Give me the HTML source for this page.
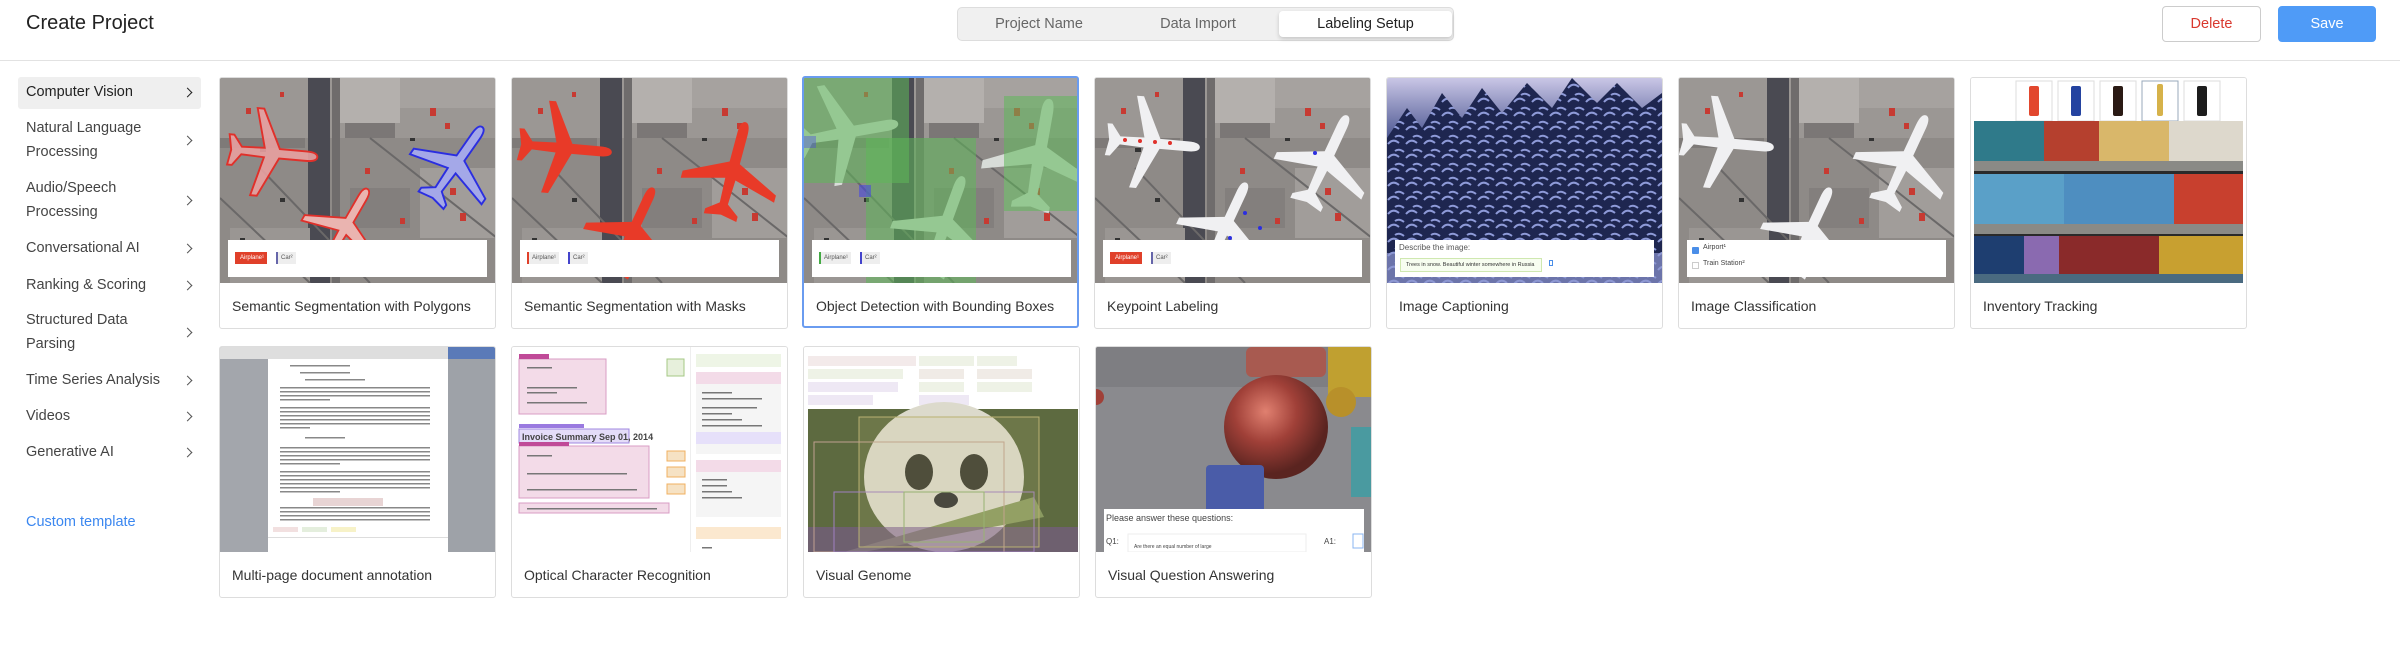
<!DOCTYPE html>
<html><head><meta charset="utf-8"><style>
*{box-sizing:border-box;margin:0;padding:0}
body{width:2400px;height:655px;background:#fff;font-family:"Liberation Sans",Arial,sans-serif;position:relative;overflow:hidden;color:#333}
.abs{position:absolute}
.hdr{position:absolute;left:26px;top:10px;font-size:20px;font-weight:500;color:#222;line-height:26px}
.hline{position:absolute;left:0;top:60px;width:2400px;height:1px;background:#e2e2e2}
.tabs{position:absolute;left:957px;top:7px;width:497px;height:34px;background:#f0f0f0;border:1px solid #ddd;border-radius:5px}
.tab{position:absolute;top:0;height:32px;line-height:32px;font-size:14.5px;color:#666;text-align:center}
.tab.act{top:3px;height:26px;line-height:26px;background:#fff;border-radius:4px;box-shadow:0 2px 4px rgba(0,0,0,.18);color:#222}
.btn{position:absolute;top:6px;height:36px;line-height:34px;text-align:center;font-size:14.5px;border-radius:4px}
.side{position:absolute;left:26px;font-size:14.5px;color:#444;line-height:24px}
.chev{position:absolute;left:184px;width:7px;height:7px;border-right:1.6px solid #555;border-top:1.6px solid #555;transform:rotate(45deg)}
.card{position:absolute;width:277px;height:252px;border:1px solid #ddd;border-radius:3px;overflow:hidden;background:#fff}
.card svg{position:absolute;left:0;top:0;width:275px;height:205px;display:block}
.card .t{position:absolute;left:12px;top:217px;font-size:14px;color:#333;line-height:22px;white-space:nowrap}
.card.sel{border:2px solid #6a9cf0}
.ov{position:absolute;left:8px;top:162px;width:259px;height:37px;background:#fff}
.tag{position:absolute;top:12px;height:12px;font-size:6px;line-height:12px;padding:0 3px;background:#eee;border-left:2px solid #999;color:#555}
</style></head><body>
<svg width="0" height="0" style="position:absolute">
<defs>
<path id="pl" d="M0,-50 C4,-50 5,-44 5,-38 L5,-10 L46,10 L46,17 L5,6 L4,30 L16,39 L16,44 L0,41 L-16,44 L-16,39 L-4,30 L-5,6 L-46,17 L-46,10 L-5,-10 L-5,-38 C-5,-44 -4,-50 0,-50Z"/>
<g id="ap">
<rect width="277" height="205" fill="#8e8a87"/>
<rect x="0" y="0" width="277" height="60" fill="#9b9794"/>
<rect x="88" y="0" width="22" height="205" fill="#4a4a52"/>
<rect x="112" y="0" width="8" height="205" fill="#6f6c6c"/>
<rect x="120" y="0" width="60" height="45" fill="#b4b0ad"/>
<rect x="125" y="45" width="50" height="15" fill="#7b7776"/>
<rect x="180" y="0" width="97" height="30" fill="#a6a29f"/>
<rect x="0" y="60" width="85" height="10" fill="#7e7a78"/>
<rect x="200" y="90" width="77" height="70" fill="#a19d9a"/>
<rect x="10" y="150" width="80" height="55" fill="#9a9693"/>
<rect x="130" y="110" width="60" height="40" fill="#837f7d"/>
<path d="M0 120 L90 205 M40 90 L150 205 M150 60 L277 160" stroke="#6a6868" stroke-width="2"/>
<g fill="#c73a32"><rect x="26" y="30" width="5" height="6"/><rect x="210" y="30" width="6" height="8"/><rect x="225" y="45" width="5" height="6"/><rect x="145" y="90" width="5" height="6"/><rect x="230" y="110" width="6" height="7"/><rect x="180" y="140" width="5" height="6"/><rect x="240" y="135" width="6" height="8"/><rect x="60" y="14" width="4" height="5"/></g>
<g fill="#333"><rect x="40" y="70" width="6" height="4"/><rect x="60" y="120" width="5" height="4"/><rect x="160" y="170" width="6" height="4"/><rect x="20" y="160" width="5" height="3"/><rect x="190" y="60" width="5" height="3"/></g>
</g>
</defs></svg>

<div class="hdr">Create Project</div>
<div class="tabs">
<div class="tab" style="left:1px;width:160px">Project Name</div>
<div class="tab" style="left:160px;width:160px">Data Import</div>
<div class="tab act" style="left:321px;width:173px">Labeling Setup</div>
</div>
<div class="btn" style="left:2162px;width:99px;border:1px solid #ccc;color:#d9382e;background:#fff">Delete</div>
<div class="btn" style="left:2278px;width:98px;background:#4f9bf7;color:#fff;border:1px solid #4f9bf7">Save</div>
<div class="hline"></div>

<div class="abs" style="left:18px;top:77px;width:183px;height:32px;background:#efefef;border-radius:3px"></div>
<div class="side" style="top:80px;color:#222">Computer Vision</div><div class="chev" style="top:89px;border-color:#222"></div>
<div class="side" style="top:116px">Natural Language<br>Processing</div><div class="chev" style="top:137px"></div>
<div class="side" style="top:176px">Audio/Speech<br>Processing</div><div class="chev" style="top:197px"></div>
<div class="side" style="top:236px">Conversational AI</div><div class="chev" style="top:245px"></div>
<div class="side" style="top:273px">Ranking &amp; Scoring</div><div class="chev" style="top:282px"></div>
<div class="side" style="top:308px">Structured Data<br>Parsing</div><div class="chev" style="top:329px"></div>
<div class="side" style="top:368px">Time Series Analysis</div><div class="chev" style="top:377px"></div>
<div class="side" style="top:404px">Videos</div><div class="chev" style="top:413px"></div>
<div class="side" style="top:440px">Generative AI</div><div class="chev" style="top:449px"></div>
<div class="side" style="top:510px;color:#3b87f0">Custom template</div>

<div class="card" style="left:219px;top:77px">
<svg viewBox="0 0 275 205"><use href="#ap"/>
<use href="#pl" transform="translate(50,75) rotate(95) scale(0.95)" fill="#e8a0a0" stroke="#e0302a" stroke-width="2" fill-opacity=".9"/>
<use href="#pl" transform="translate(235,88) rotate(35) scale(0.95)" fill="#a4a8e8" stroke="#2b2ee0" stroke-width="2"/>
<use href="#pl" transform="translate(125,150) rotate(30) scale(0.9)" fill="#eab4b0" stroke="#e0302a" stroke-width="2"/>
</svg>
<div class="ov"><div class="tag" style="left:7px;background:#e0402a;color:#fff;border-color:#e0402a">Airplane¹</div><div class="tag" style="left:48px;border-color:#66a">Car²</div></div>
<div class="t">Semantic Segmentation with Polygons</div></div>

<div class="card" style="left:511px;top:77px">
<svg viewBox="0 0 275 205"><use href="#ap"/>
<use href="#pl" transform="translate(50,70) rotate(95)" fill="#e83a28"/>
<use href="#pl" transform="translate(220,95) rotate(15) scale(1.05)" fill="#e83a28"/>
<use href="#pl" transform="translate(120,155) rotate(25)" fill="#e83a28"/>
</svg>
<div class="ov"><div class="tag" style="left:7px;border-color:#e0402a">Airplane¹</div><div class="tag" style="left:48px;border-color:#44c">Car²</div></div>
<div class="t">Semantic Segmentation with Masks</div></div>

<div class="card sel" style="left:802px;top:76px">
<svg viewBox="0 0 275 205"><use href="#ap"/>
<use href="#pl" transform="translate(40,55) rotate(80) scale(1.1)" fill="#d8dcd8"/>
<use href="#pl" transform="translate(235,80) rotate(10) scale(1.2)" fill="#d8dcd8"/>
<use href="#pl" transform="translate(140,150) rotate(20) scale(1.1)" fill="#d8dcd8"/>
<rect x="0" y="0" width="105" height="105" fill="#5fb85a" fill-opacity=".55"/>
<rect x="200" y="18" width="75" height="115" fill="#5fb85a" fill-opacity=".55"/>
<rect x="62" y="60" width="110" height="145" fill="#5fb85a" fill-opacity=".55"/>
<rect x="55" y="107" width="12" height="12" fill="#4a4ae0" fill-opacity=".6"/>
<rect x="0" y="58" width="12" height="12" fill="#4a4ae0" fill-opacity=".4"/>
</svg>
<div class="ov"><div class="tag" style="left:7px;border-color:#4a4">Airplane¹</div><div class="tag" style="left:48px;border-color:#44c">Car²</div></div>
<div class="t">Object Detection with Bounding Boxes</div></div>

<div class="card" style="left:1094px;top:77px">
<svg viewBox="0 0 275 205"><use href="#ap"/>
<use href="#pl" transform="translate(55,65) rotate(95)" fill="#f0f0f2"/>
<use href="#pl" transform="translate(230,85) rotate(25) scale(1.05)" fill="#f0f0f2"/>
<use href="#pl" transform="translate(130,150) rotate(25)" fill="#f0f0f2"/>
<g fill="#e0302a"><circle cx="30" cy="62" r="2"/><circle cx="45" cy="63" r="2"/><circle cx="60" cy="64" r="2"/><circle cx="75" cy="65" r="2"/></g>
<g fill="#2b2ee0"><circle cx="165" cy="150" r="2"/><circle cx="150" cy="135" r="2"/><circle cx="135" cy="160" r="2"/><circle cx="120" cy="170" r="2"/><circle cx="220" cy="75" r="2"/></g>
</svg>
<div class="ov"><div class="tag" style="left:7px;background:#e0402a;color:#fff;border-color:#e0402a">Airplane¹</div><div class="tag" style="left:48px;border-color:#66a">Car²</div></div>
<div class="t">Keypoint Labeling</div></div>

<div class="card" style="left:1386px;top:77px">
<svg viewBox="0 0 275 205">
<defs><linearGradient id="sky" x1="0" y1="0" x2="0" y2="1"><stop offset="0" stop-color="#c9c6e6"/><stop offset=".3" stop-color="#4a5590"/><stop offset="1" stop-color="#1c2450"/></linearGradient>
<pattern id="snow" width="18" height="14" patternUnits="userSpaceOnUse"><rect width="18" height="14" fill="#1e2650"/><path d="M1 10 Q6 4 12 9 M8 3 Q12 0 17 4" stroke="#8e9ad8" stroke-width="2" fill="none"/></pattern></defs>
<rect width="275" height="205" fill="url(#sky)"/>
<path d="M0 60 L20 30 L35 50 L55 15 L75 40 L95 10 L115 35 L140 5 L165 30 L185 0 L210 25 L230 5 L255 30 L275 15 L275 205 L0 205Z" fill="url(#snow)"/>
<rect x="0" y="175" width="275" height="30" fill="#8d96d0" opacity=".7"/>
</svg>
<div class="ov"><div style="position:absolute;left:4px;top:3px;font-size:8px;color:#555">Describe the image:</div>
<div style="position:absolute;left:5px;top:18px;width:142px;height:14px;background:#f7fdf0;border:1px solid #cfe8b0;font-size:5.5px;line-height:12px;padding-left:5px;color:#333">Trees in snow. Beautiful winter somewhere in Russia</div>
<div style="position:absolute;left:154px;top:20px;width:4px;height:6px;border:1px solid #4a8ee8"></div></div>
<div class="t">Image Captioning</div></div>

<div class="card" style="left:1678px;top:77px">
<svg viewBox="0 0 275 205"><use href="#ap"/>
<use href="#pl" transform="translate(45,65) rotate(95)" fill="#f0f0f2"/>
<use href="#pl" transform="translate(225,85) rotate(25) scale(1.05)" fill="#f0f0f2"/>
<use href="#pl" transform="translate(130,155) rotate(25)" fill="#f0f0f2"/>
</svg>
<div class="ov"><div style="position:absolute;left:5px;top:7px;width:7px;height:7px;background:#4a8ee8;border-radius:1px"></div><div style="position:absolute;left:16px;top:4px;font-size:7px;color:#444">Airport¹</div>
<div style="position:absolute;left:5px;top:22px;width:7px;height:7px;border:1px solid #ccc"></div><div style="position:absolute;left:16px;top:20px;font-size:7px;color:#444">Train Station²</div></div>
<div class="t">Image Classification</div></div>

<div class="card" style="left:1970px;top:77px">
<svg viewBox="0 0 275 205">
<rect width="275" height="205" fill="#fff"/>
<g stroke="#ddd" fill="#fff"><rect x="45" y="3" width="36" height="40"/><rect x="87" y="3" width="36" height="40"/><rect x="129" y="3" width="36" height="40"/><rect x="171" y="3" width="36" height="40" stroke="#9ab"/><rect x="213" y="3" width="36" height="40"/></g>
<rect x="58" y="8" width="10" height="30" rx="2" fill="#e2472e"/><rect x="100" y="8" width="10" height="30" rx="2" fill="#2443a0"/><rect x="142" y="8" width="10" height="30" rx="2" fill="#2a1a14"/><rect x="186" y="6" width="6" height="32" rx="2" fill="#d6b24a"/><rect x="226" y="8" width="10" height="30" rx="2" fill="#1d1d1d"/>
<rect x="3" y="43" width="269" height="162" fill="#2a2a2a"/>
<g><rect x="3" y="43" width="70" height="40" fill="#2f7a8a"/><rect x="73" y="43" width="55" height="40" fill="#b5402e"/><rect x="128" y="43" width="70" height="40" fill="#d9b76a"/><rect x="198" y="43" width="74" height="40" fill="#ddd8cc"/></g>
<rect x="3" y="83" width="269" height="10" fill="#8a8a86"/>
<g><rect x="3" y="96" width="90" height="50" fill="#5aa0c8"/><rect x="93" y="96" width="110" height="50" fill="#4e8ec0"/><rect x="203" y="96" width="69" height="50" fill="#c8402e"/></g>
<rect x="3" y="146" width="269" height="10" fill="#8a8a86"/>
<g><rect x="3" y="158" width="50" height="40" fill="#1e3e70"/><rect x="53" y="158" width="35" height="40" fill="#8a6ab0"/><rect x="88" y="158" width="100" height="40" fill="#8a2a2a"/><rect x="188" y="158" width="84" height="40" fill="#c8a030"/></g>
<rect x="3" y="196" width="269" height="9" fill="#4a6a80"/>
</svg>
<div class="t">Inventory Tracking</div></div>

<div class="card" style="left:219px;top:346px">
<svg viewBox="0 0 275 205">
<rect width="275" height="205" fill="#f4f4f4"/>
<rect x="0" y="0" width="48" height="205" fill="#a3a6ac"/>
<rect x="0" y="0" width="275" height="12" fill="#dedede"/>
<rect x="48" y="12" width="180" height="193" fill="#fff"/>
<rect x="228" y="0" width="47" height="12" fill="#5a7ab8"/>
<rect x="228" y="12" width="47" height="193" fill="#9ea2a8"/>
<g fill="#888"><rect x="70" y="18" width="60" height="1.5"/><rect x="80" y="25" width="50" height="1.5"/><rect x="85" y="32" width="60" height="1.5"/>
<rect x="60" y="40" width="150" height="1.5"/><rect x="60" y="44" width="150" height="1.5"/><rect x="60" y="48" width="150" height="1.5"/><rect x="60" y="52" width="50" height="1.5"/>
<rect x="60" y="60" width="150" height="1.5"/><rect x="60" y="64" width="150" height="1.5"/><rect x="60" y="68" width="150" height="1.5"/><rect x="60" y="72" width="150" height="1.5"/><rect x="60" y="76" width="150" height="1.5"/><rect x="60" y="80" width="30" height="1.5"/>
<rect x="85" y="90" width="40" height="1.5"/>
<rect x="60" y="100" width="150" height="1.5"/><rect x="60" y="104" width="150" height="1.5"/><rect x="60" y="108" width="150" height="1.5"/><rect x="60" y="112" width="150" height="1.5"/><rect x="60" y="116" width="60" height="1.5"/>
<rect x="60" y="124" width="150" height="1.5"/><rect x="60" y="128" width="150" height="1.5"/><rect x="60" y="132" width="150" height="1.5"/><rect x="60" y="136" width="150" height="1.5"/><rect x="60" y="140" width="150" height="1.5"/><rect x="60" y="144" width="60" height="1.5"/>
<rect x="60" y="160" width="150" height="1.5"/><rect x="60" y="164" width="150" height="1.5"/><rect x="60" y="168" width="150" height="1.5"/><rect x="60" y="172" width="150" height="1.5"/></g>
<rect x="93" y="151" width="70" height="8" fill="#e8d4d4"/>
<rect x="53" y="180" width="25" height="5" fill="#f2e0e0"/><rect x="82" y="180" width="25" height="5" fill="#e4eedd"/><rect x="111" y="180" width="25" height="5" fill="#f7f2c8"/>
<rect x="48" y="190" width="180" height="1" fill="#ddd"/>
</svg>
<div class="t">Multi-page document annotation</div></div>

<div class="card" style="left:511px;top:346px">
<svg viewBox="0 0 275 205" font-family="Liberation Sans" font-size="5" fill="#444">
<rect width="275" height="205" fill="#fff"/>
<rect x="178" y="0" width="1" height="205" fill="#eee"/>
<rect x="7" y="12" width="87" height="55" fill="#f3dbe8" stroke="#d89cc4"/>
<rect x="7" y="7" width="30" height="5" fill="#c04a98"/>
<rect x="155" y="12" width="17" height="17" fill="#e7f0dc" stroke="#a4c884"/>
<rect x="7" y="82" width="110" height="14" fill="#e4dcf8" stroke="#a088e0"/>
<text x="10" y="93" font-size="9" font-weight="bold" fill="#444">Invoice Summary Sep 01, 2014</text>
<rect x="7" y="99" width="130" height="52" fill="#f3dbe8" stroke="#d89cc4"/>
<rect x="7" y="77" width="65" height="4" fill="#9a7ae0"/><rect x="7" y="95" width="50" height="4" fill="#c04a98"/>
<g fill="#f6e2c4" stroke="#f0b060"><rect x="155" y="104" width="18" height="10"/><rect x="155" y="120" width="18" height="10"/><rect x="155" y="137" width="18" height="10"/></g>
<rect x="7" y="156" width="150" height="10" fill="#f3dbe8" stroke="#d89cc4"/>
<g fill="#eef5e6"><rect x="184" y="7" width="85" height="13"/></g>
<g fill="#f3dbe8"><rect x="184" y="25" width="85" height="12"/><rect x="184" y="113" width="85" height="12"/></g>
<g fill="#f5f5f5"><rect x="184" y="37" width="85" height="70"/><rect x="184" y="125" width="85" height="45"/></g>
<rect x="184" y="85" width="85" height="12" fill="#e6e0fa"/>
<rect x="184" y="180" width="85" height="12" fill="#fbe8cf"/>
<g fill="#777"><rect x="190" y="45" width="30" height="1.5"/><rect x="190" y="51" width="60" height="1.5"/><rect x="190" y="60" width="55" height="1.5"/><rect x="190" y="66" width="30" height="1.5"/><rect x="190" y="72" width="40" height="1.5"/><rect x="190" y="78" width="60" height="1.5"/>
<rect x="15" y="20" width="25" height="1.5"/><rect x="15" y="40" width="50" height="1.5"/><rect x="15" y="45" width="30" height="1.5"/><rect x="15" y="55" width="60" height="1.5"/>
<rect x="15" y="108" width="25" height="1.5"/><rect x="15" y="126" width="100" height="1.5"/><rect x="15" y="142" width="110" height="1.5"/><rect x="15" y="161" width="130" height="1.5"/>
<rect x="190" y="132" width="25" height="1.5"/><rect x="190" y="138" width="25" height="1.5"/><rect x="190" y="144" width="30" height="1.5"/><rect x="190" y="150" width="40" height="1.5"/><rect x="190" y="200" width="10" height="1.5"/></g>
</svg>
<div class="t">Optical Character Recognition</div></div>

<div class="card" style="left:803px;top:346px">
<svg viewBox="0 0 275 205">
<rect width="275" height="205" fill="#fff"/>
<g fill="#f3eaea"><rect x="4" y="9" width="108" height="10"/></g>
<g fill="#eef2e6"><rect x="115" y="9" width="55" height="10"/><rect x="173" y="9" width="40" height="10"/><rect x="4" y="22" width="95" height="10"/><rect x="115" y="35" width="45" height="10"/><rect x="173" y="35" width="55" height="10"/></g>
<g fill="#f0ebe6"><rect x="115" y="22" width="45" height="10"/><rect x="173" y="22" width="55" height="10"/></g>
<g fill="#eee8f4"><rect x="4" y="35" width="90" height="10"/><rect x="4" y="48" width="65" height="10"/><rect x="115" y="48" width="50" height="10"/></g>
<rect x="4" y="62" width="270" height="143" fill="#5d6a40"/>
<ellipse cx="140" cy="130" rx="80" ry="75" fill="#dcdacc"/>
<ellipse cx="115" cy="125" rx="14" ry="18" fill="#3a3a30"/><ellipse cx="170" cy="125" rx="14" ry="18" fill="#3a3a30"/>
<ellipse cx="142" cy="153" rx="12" ry="8" fill="#333"/>
<path d="M40 205 L230 150 L240 170 L60 205Z" fill="#8a9a60"/>
<rect x="4" y="180" width="270" height="25" fill="#7a5a90" opacity=".6"/>
<g fill="none" stroke-width="1"><rect x="55" y="70" width="180" height="130" stroke="#b8b070"/><rect x="10" y="95" width="190" height="110" stroke="#c0a090"/><rect x="30" y="145" width="200" height="60" stroke="#a080c0"/><rect x="100" y="145" width="80" height="50" stroke="#90b070"/></g>
<rect x="55" y="70" width="180" height="130" fill="#c8c080" opacity=".15"/>
</svg>
<div class="t">Visual Genome</div></div>

<div class="card" style="left:1095px;top:346px">
<svg viewBox="0 0 275 205">
<defs><radialGradient id="sph" cx=".4" cy=".35" r=".6"><stop offset="0" stop-color="#e08070"/><stop offset=".5" stop-color="#a04038"/><stop offset="1" stop-color="#5a2420"/></radialGradient></defs>
<rect width="275" height="205" fill="#8a8a8e"/>
<rect x="0" y="0" width="275" height="40" fill="#7e7e82"/>
<rect x="150" y="0" width="80" height="30" rx="6" fill="#a85a50"/>
<rect x="232" y="0" width="43" height="50" fill="#c0a030"/>
<circle cx="180" cy="80" r="52" fill="url(#sph)"/>
<circle cx="245" cy="55" r="15" fill="#b8902a"/>
<circle cx="0" cy="50" r="8" fill="#a04038"/>
<rect x="110" y="118" width="58" height="62" rx="4" fill="#4a5ca8"/>
<rect x="255" y="80" width="20" height="70" fill="#4a9aa0"/>
<rect x="8" y="162" width="260" height="43" fill="#fff"/>
<text x="10" y="174" font-family="Liberation Sans" font-size="9" fill="#444">Please answer these questions:</text>
<text x="10" y="197" font-family="Liberation Sans" font-size="8" fill="#444">Q1:</text>
<rect x="32" y="187" width="178" height="18" fill="#fff" stroke="#eee"/>
<text x="38" y="201" font-family="Liberation Sans" font-size="5" fill="#444">Are there an equal number of large</text>
<text x="228" y="197" font-family="Liberation Sans" font-size="8" fill="#444">A1:</text>
<rect x="257" y="187" width="10" height="14" fill="#fff" stroke="#8ab4f0"/>
</svg>
<div class="t">Visual Question Answering</div></div>

</body></html>
